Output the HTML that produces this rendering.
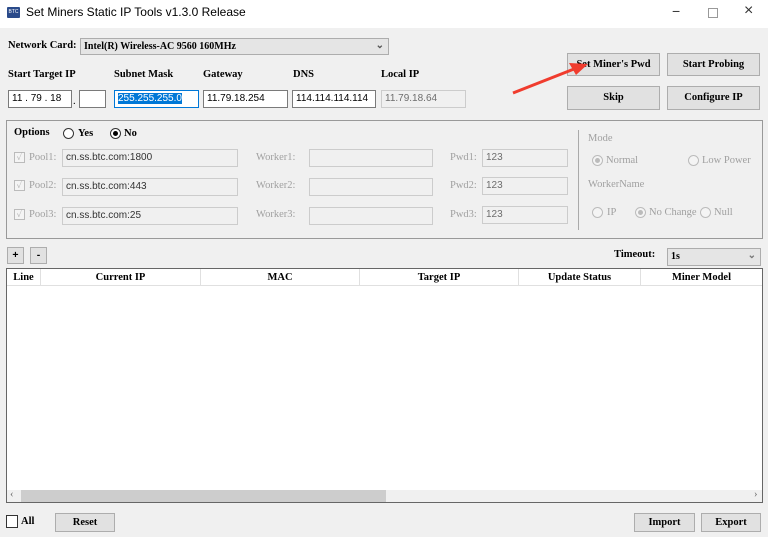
<!DOCTYPE html><html><head><style>
body{margin:0;width:768px;height:537px;background:#f0f0f0;position:relative;overflow:hidden;font-family:"Liberation Serif","Noto Serif CJK SC",serif;font-size:10.5px;color:#000}
div,span{position:absolute;box-sizing:border-box}
.t{white-space:nowrap}
.in{background:#fff;border:1px solid #7a7a7a;padding:1px 3px;line-height:14px;font-family:"Liberation Sans",sans-serif;font-size:10px}
.dis{background:#f0f0f0;border:1px solid #ccc;color:#6d6d6d}
.btn{background:#e1e1e1;border:1px solid #adadad;text-align:center;font-weight:bold}
.g{color:#a0a0a0}
.rd{width:11px;height:11px;border:1px solid #333;border-radius:50%;background:#fff}
.rdg{border-color:#bbb;background:#f4f4f4}
.ck{width:11px;height:11px;border:1px solid #bbb;background:#f4f4f4;color:#aaa;font-size:9px;line-height:9px;text-align:center}
.th{top:0;height:17px;line-height:17px;text-align:center;border-right:1px solid #e0e0e0;font-weight:bold}
</style></head><body>
<div style="left:0;top:0;width:768px;height:28px;background:#fff"></div>
<div style="left:7px;top:7px;width:13px;height:11px;background:#2a4a8a;border-radius:1px;color:#fff;font-size:5px;line-height:11px;text-align:center;font-family:'Liberation Sans'">BTC</div>
<div class="t" style="left:26px;top:5px;font-family:'Liberation Sans',sans-serif;font-size:12px">Set Miners Static IP Tools v1.3.0 Release</div>
<div class="t" style="left:672px;top:3px;font-family:'Liberation Sans';font-size:14px;color:#333">−</div>
<div style="left:708px;top:8px;width:10px;height:10px;border:1px solid #999"></div>
<div class="t" style="left:744px;top:2px;font-family:'Liberation Sans';font-size:16px;color:#333">×</div>

<div class="t" style="left:8px;top:40px;font-weight:bold">Network Card:</div>
<div class="in" style="left:80px;top:38px;width:309px;height:17px;background:#e5e5e5;border-color:#adadad;font-family:'Liberation Serif';font-weight:bold">Intel(R) Wireless-AC 9560 160MHz<span style="right:4px;top:0;color:#555">⌄</span></div>

<div class="t" style="left:8px;top:69px;font-weight:bold">Start Target IP</div>
<div class="t" style="left:114px;top:69px;font-weight:bold">Subnet Mask</div>
<div class="t" style="left:203px;top:69px;font-weight:bold">Gateway</div>
<div class="t" style="left:293px;top:69px;font-weight:bold">DNS</div>
<div class="t" style="left:381px;top:69px;font-weight:bold">Local IP</div>
<div class="in" style="left:8px;top:90px;width:64px;height:18px">11 . 79 . 18</div>
<div class="t" style="left:73px;top:96px">.</div>
<div class="in" style="left:79px;top:90px;width:27px;height:18px"></div>
<div class="in" style="left:114px;top:90px;width:85px;height:18px;border-color:#0078d7"><span style="position:static;background:#0078d7;color:#fff">255.255.255.0</span></div>
<div class="in" style="left:203px;top:90px;width:85px;height:18px">11.79.18.254</div>
<div class="in" style="left:292px;top:90px;width:84px;height:18px">114.114.114.114</div>
<div class="in dis" style="left:381px;top:90px;width:85px;height:18px">11.79.18.64</div>

<div class="btn" style="left:567px;top:53px;width:93px;height:23px;line-height:21px">Set Miner's Pwd</div>
<div class="btn" style="left:667px;top:53px;width:93px;height:23px;line-height:21px">Start Probing</div>
<div class="btn" style="left:567px;top:86px;width:93px;height:24px;line-height:22px">Skip</div>
<div class="btn" style="left:667px;top:86px;width:93px;height:24px;line-height:22px">Configure IP</div>
<svg style="position:absolute;left:0;top:0" width="768" height="537"><path d="M513 93 L574 69" stroke="#f03c2e" stroke-width="3"/><path d="M588 64 L569 63 L576 75 Z" fill="#f03c2e"/></svg>

<div style="left:6px;top:120px;width:757px;height:119px;border:1px solid #999"></div>
<div class="t" style="left:14px;top:127px;font-weight:bold">Options</div>
<div class="rd" style="left:63px;top:128px"></div><div class="t" style="left:78px;top:128px;font-weight:bold">Yes</div>
<div class="rd" style="left:110px;top:128px"><span style="left:2px;top:2px;width:5px;height:5px;background:#000;border-radius:50%"></span></div><div class="t" style="left:124px;top:128px;font-weight:bold">No</div>

<div class="ck" style="left:14px;top:152px">✓</div><div class="t g" style="left:29px;top:152px">Pool1:</div>
<div class="in dis" style="left:62px;top:149px;width:176px;height:18px;color:#333">cn.ss.btc.com:1800</div>
<div class="t g" style="left:256px;top:152px">Worker1:</div><div class="in dis" style="left:309px;top:149px;width:124px;height:18px"></div>
<div class="t g" style="left:450px;top:152px">Pwd1:</div><div class="in dis" style="left:482px;top:149px;width:86px;height:18px">123</div>
<div class="ck" style="left:14px;top:180px">✓</div><div class="t g" style="left:29px;top:180px">Pool2:</div>
<div class="in dis" style="left:62px;top:178px;width:176px;height:18px;color:#333">cn.ss.btc.com:443</div>
<div class="t g" style="left:256px;top:180px">Worker2:</div><div class="in dis" style="left:309px;top:178px;width:124px;height:18px"></div>
<div class="t g" style="left:450px;top:180px">Pwd2:</div><div class="in dis" style="left:482px;top:177px;width:86px;height:18px">123</div>
<div class="ck" style="left:14px;top:209px">✓</div><div class="t g" style="left:29px;top:209px">Pool3:</div>
<div class="in dis" style="left:62px;top:207px;width:176px;height:18px;color:#333">cn.ss.btc.com:25</div>
<div class="t g" style="left:256px;top:209px">Worker3:</div><div class="in dis" style="left:309px;top:207px;width:124px;height:18px"></div>
<div class="t g" style="left:450px;top:209px">Pwd3:</div><div class="in dis" style="left:482px;top:206px;width:86px;height:18px">123</div>
<div style="left:578px;top:130px;width:1px;height:100px;background:#aaa"></div>
<div class="t g" style="left:588px;top:133px">Mode</div>
<div class="rd rdg" style="left:592px;top:155px"><span style="left:2px;top:2px;width:5px;height:5px;background:#bbb;border-radius:50%"></span></div><div class="t g" style="left:606px;top:155px">Normal</div>
<div class="rd rdg" style="left:688px;top:155px"></div><div class="t g" style="left:702px;top:155px">Low Power</div>
<div class="t g" style="left:588px;top:179px">WorkerName</div>
<div class="rd rdg" style="left:592px;top:207px"></div><div class="t g" style="left:607px;top:207px">IP</div>
<div class="rd rdg" style="left:635px;top:207px"><span style="left:2px;top:2px;width:5px;height:5px;background:#bbb;border-radius:50%"></span></div><div class="t g" style="left:649px;top:207px">No Change</div>
<div class="rd rdg" style="left:700px;top:207px"></div><div class="t g" style="left:714px;top:207px">Null</div>

<div class="btn" style="left:7px;top:247px;width:17px;height:17px;line-height:15px;font-family:'Liberation Sans'">+</div>
<div class="btn" style="left:30px;top:247px;width:17px;height:17px;line-height:15px;font-family:'Liberation Sans'">-</div>
<div class="t" style="left:614px;top:249px;font-weight:bold">Timeout:</div>
<div class="in" style="left:667px;top:248px;width:94px;height:18px;background:#e5e5e5;border-color:#adadad;font-family:'Liberation Serif';font-weight:bold">1s<span style="right:4px;top:0;color:#777">⌄</span></div>

<div style="left:6px;top:268px;width:757px;height:235px;background:#fff;border:1px solid #666">
<div style="left:0;top:0;width:755px;height:17px;border-bottom:1px solid #e0e0e0"></div>
<div class="th" style="left:0;width:34px">Line</div>
<div class="th" style="left:34px;width:160px">Current IP</div>
<div class="th" style="left:194px;width:159px">MAC</div>
<div class="th" style="left:353px;width:159px">Target IP</div>
<div class="th" style="left:512px;width:122px">Update Status</div>
<div class="th" style="left:634px;width:121px;border:0">Miner Model</div>
<div style="left:0;top:221px;width:755px;height:12px;background:#f0f0f0"></div>
<div style="left:14px;top:221px;width:365px;height:12px;background:#cdcdcd"></div>
<div class="t" style="left:3px;top:220px;color:#666">‹</div><div class="t" style="left:747px;top:220px;color:#666">›</div>
</div>

<div style="left:6px;top:515px;width:12px;height:13px;border:1px solid #333;background:#fff"></div>
<div class="t" style="left:21px;top:516px;font-weight:bold">All</div>
<div class="btn" style="left:55px;top:513px;width:60px;height:19px;line-height:17px">Reset</div>
<div class="btn" style="left:634px;top:513px;width:61px;height:19px;line-height:17px">Import</div>
<div class="btn" style="left:701px;top:513px;width:60px;height:19px;line-height:17px">Export</div>
</body></html>
